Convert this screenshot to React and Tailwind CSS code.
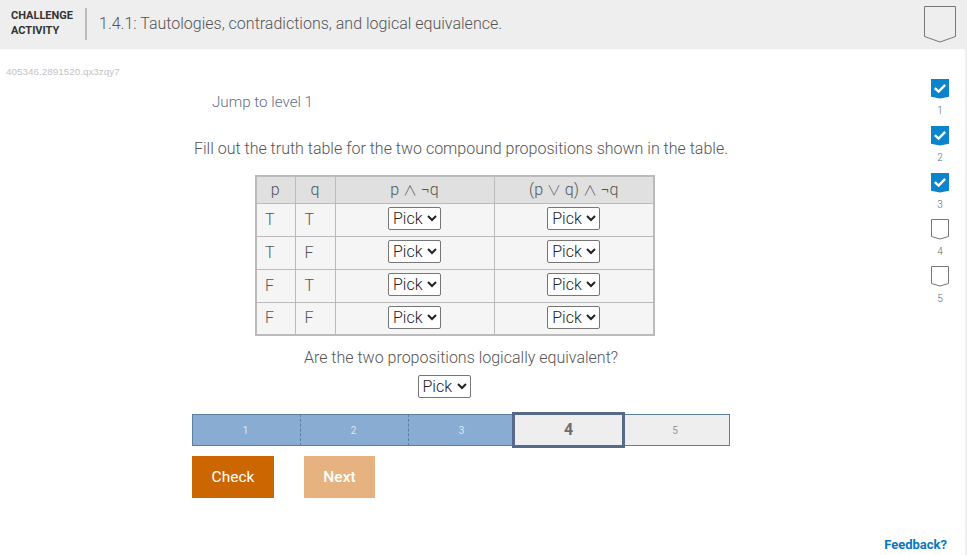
import React from 'react'

const rows = [
  ['T', 'T'],
  ['T', 'F'],
  ['F', 'T'],
  ['F', 'F'],
]

const levels = [1, 2, 3, 4, 5]

function PickSelect({ block }) {
  return (
    <select className={`h-[23px] w-[53px] rounded-[2px] border border-[#767676] bg-white text-[16px] leading-none text-[#222] ${block ? 'mx-auto block' : 'align-middle'}`}>
      <option>Pick</option>
    </select>
  )
}

function Chevron({ small, done }) {
  if (small) {
    return (
      <svg width="18" height="21" viewBox="0 0 18 21" className="block">
        {done ? (
          <>
            <path d="M0 1H18V18.8L9 20.5L0 18.8Z" fill="#0a84cc" />
            <path d="M3.8 10.2L7.6 13.6L14.2 6.8" fill="none" stroke="#fff" strokeWidth="2.4" />
          </>
        ) : (
          <path d="M.5 .5H17.5V17.5L9 20L.5 17.5Z" fill="#fff" stroke="#767676" />
        )}
      </svg>
    )
  }
  return (
    <svg width="32" height="38" viewBox="0 0 32 38" className="mt-[1px] block">
      <path d="M.5 .5H31.5V30.5L16 36L.5 30.5Z" fill="none" stroke="#767676" />
    </svg>
  )
}

// the connectives come from a family that draws them thin and wide
function Sym({ children }) {
  return <span className="font-['Noto_Sans_CJK_SC',sans-serif] text-[14px] leading-none font-light">{children}</span>
}

export default function App() {
  return (
    <div className="flex min-h-[555px] flex-col bg-white font-['Roboto',sans-serif] font-light text-[#555555]">
      {/* Header */}
      <div className="flex h-[49px] items-center bg-[#eeeeee] pl-[11px] pr-[11px]">
        <div className="mb-[3px] w-[74px] text-[11px] font-bold leading-[15px] text-[#333]">
          CHALLENGE<br />ACTIVITY
        </div>
        <div className="mb-[1px] h-[32px] w-[2px] bg-[#bbbbbb]" />
        <div className="mb-[2px] ml-3 flex-1 text-[16px]">1.4.1: Tautologies, contradictions, and logical equivalence.</div>
        <Chevron />
      </div>

      <div className="flex flex-1">
        <div className="flex flex-1 flex-col">
          <div className="flex">
            <div className="flex-1">
              <div className="pl-[6px] pt-[17px] font-['Liberation_Sans',sans-serif] text-[9.9px] font-normal leading-[12px] text-[#c4c4c4]">
                405346.2891520.qx3zqy7
              </div>

              <div className="ml-[192px] w-[538px]">
                <div className="pl-[20px] pt-[15px] text-[15.2px] leading-[18px] text-[#5f6f88]">Jump to level 1</div>
                <div className="pl-[2px] pt-[28px] text-[16px] leading-[20px]">
                  Fill out the truth table for the two compound propositions shown in the table.
                </div>

                <table className="ml-[63px] mt-[16px] w-[400px] table-fixed border-collapse border-2 border-[#bbbbbb] text-[16px]">
                  <thead>
                    <tr className="h-[27px] bg-[#e0e0e0] text-center">
                      <th className="w-[39px] border border-[#bbbbbb] pr-[1px] font-light">p</th>
                      <th className="w-[40px] border border-[#bbbbbb] font-light">q</th>
                      <th className="w-[159px] border border-[#bbbbbb] font-light">p <Sym>∧</Sym> ¬q</th>
                      <th className="border border-[#bbbbbb] font-light">(p <Sym>∨</Sym> q) <Sym>∧</Sym> ¬q</th>
                    </tr>
                  </thead>
                  <tbody>
                    {rows.map((row, i) => (
                      <tr key={i} className="h-[33px] bg-[#f5f5f5]">
                        <td className="border border-[#bbbbbb] pl-[8px]">{row[0]}</td>
                        <td className="border border-[#bbbbbb] pl-[9px]">{row[1]}</td>
                        <td className="border border-[#bbbbbb] pb-[2px]"><PickSelect block /></td>
                        <td className="border border-[#bbbbbb] pb-[2px]"><PickSelect block /></td>
                      </tr>
                    ))}
                  </tbody>
                </table>

                <div className="pt-[12px] text-center text-[16px] leading-[20px]">Are the two propositions logically equivalent?</div>
                <div className="pr-[34px] pt-[7px] text-center leading-none"><PickSelect /></div>

                {/* Level bar */}
                <div className="mt-[16px] flex h-[32px] items-stretch">
                  {levels.map((n) => {
                    if (n === 4) {
                      return (
                        <div key={n} className="relative z-10 -my-[2px] -ml-[4px] flex w-[113px] items-center justify-center border-[3px] border-[#56698b] bg-[#eeeeee] text-[16px] font-bold text-[#6e6e6e]">
                          {n}
                        </div>
                      )
                    }
                    if (n === 5) {
                      return (
                        <div key={n} className="-ml-[4px] flex flex-1 items-center justify-center border border-l-0 border-[#5b7fa3] bg-[#eeeeee] text-[10px] font-normal text-[#999]">
                          {n}
                        </div>
                      )
                    }
                    return (
                      <div key={n} className={`flex w-[108px] items-center justify-center border-y border-l border-[#5b7fa3] bg-[#88acd2] pr-[2px] text-[10px] font-normal text-[#dbe8f4] ${n === 1 ? '' : '[border-left-style:dashed]'}`}>
                        {n}
                      </div>
                    )
                  })}
                </div>

                <div className="mt-[10px] flex gap-[30px]">
                  <button className="h-[42px] w-[82px] bg-[#cc6600] pt-[1px] text-[15.5px] font-normal text-white">Check</button>
                  <button className="h-[42px] w-[71px] bg-[#e6b280] pt-[1px] text-[15.5px] font-medium text-white">Next</button>
                </div>
              </div>
            </div>

            {/* Level sidebar */}
            <div className="flex w-[34px] flex-col items-start gap-[5px] pt-[29px]">
              {levels.map((n) => (
                <div key={n} className="flex h-[42px] w-[18px] flex-col items-center">
                  <Chevron small done={n < 4} />
                  <div className="pt-[6px] text-[10px] font-light leading-[11px] text-[#666]">{n}</div>
                </div>
              ))}
            </div>
          </div>

          <div className="mt-auto pb-[3px] pr-[18px] text-right text-[13px] font-bold leading-[14px] text-[#0a76bd]">Feedback?</div>
        </div>
        <div className="w-[2px] bg-[#eeeeee]" />
      </div>
    </div>
  )
}
